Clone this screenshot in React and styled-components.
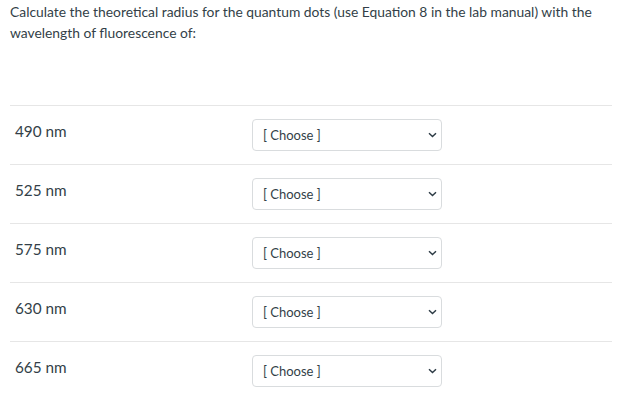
import React from "react";
import styled, { createGlobalStyle } from "styled-components";

const Global = createGlobalStyle`
  html, body { margin: 0; padding: 0; background: #fff; }
  body { font-family: Lato, "Noto Sans", sans-serif; color: #2d3b45; }
`;

const Page = styled.div`
  padding: 0 12px 0 10px;
  width: 602px;
`;

const Question = styled.p`
  margin: 0;
  padding-top: 1px;
  font-size: 13.85px;
  line-height: 21px;
  height: 104px;
  color: #333f48;
`;

const Row = styled.div`
  display: flex;
  align-items: flex-start;
  border-top: 1px solid #e6e6e6;
  padding: 13px 0 13px 5px;
  height: 32px;
`;

const Label = styled.div`
  width: 237px;
  font-size: 15.3px;
  line-height: 18px;
  padding-top: 3px;
  color: #333f48;
`;

const Select = styled.div`
  box-sizing: border-box;
  width: 190px;
  height: 32px;
  border: 1px solid #d9dcde;
  border-radius: 4px;
  display: flex;
  align-items: center;
  justify-content: space-between;
  padding: 0 4px 0 10px;
  font-size: 13px;
  color: #333f48;
`;

const Chevron = () => (
  <svg width="9" height="6" viewBox="0 0 9 6">
    <path d="M1 1.3 L4.5 4.5 L8 1.3" fill="none" stroke="#2d3b45" strokeWidth="1.5" />
  </svg>
);

const items = ["490 nm", "525 nm", "575 nm", "630 nm", "665 nm"];

export default function App() {
  return (
    <Page>
      <Global />
      <Question>
        Calculate the theoretical radius for the quantum dots (use Equation 8 in the lab manual) with the
        wavelength of fluorescence of:
      </Question>
      {items.map((it) => (
        <Row key={it}>
          <Label>{it}</Label>
          <Select>
            <span>[ Choose ]</span>
            <Chevron />
          </Select>
        </Row>
      ))}
    </Page>
  );
}
